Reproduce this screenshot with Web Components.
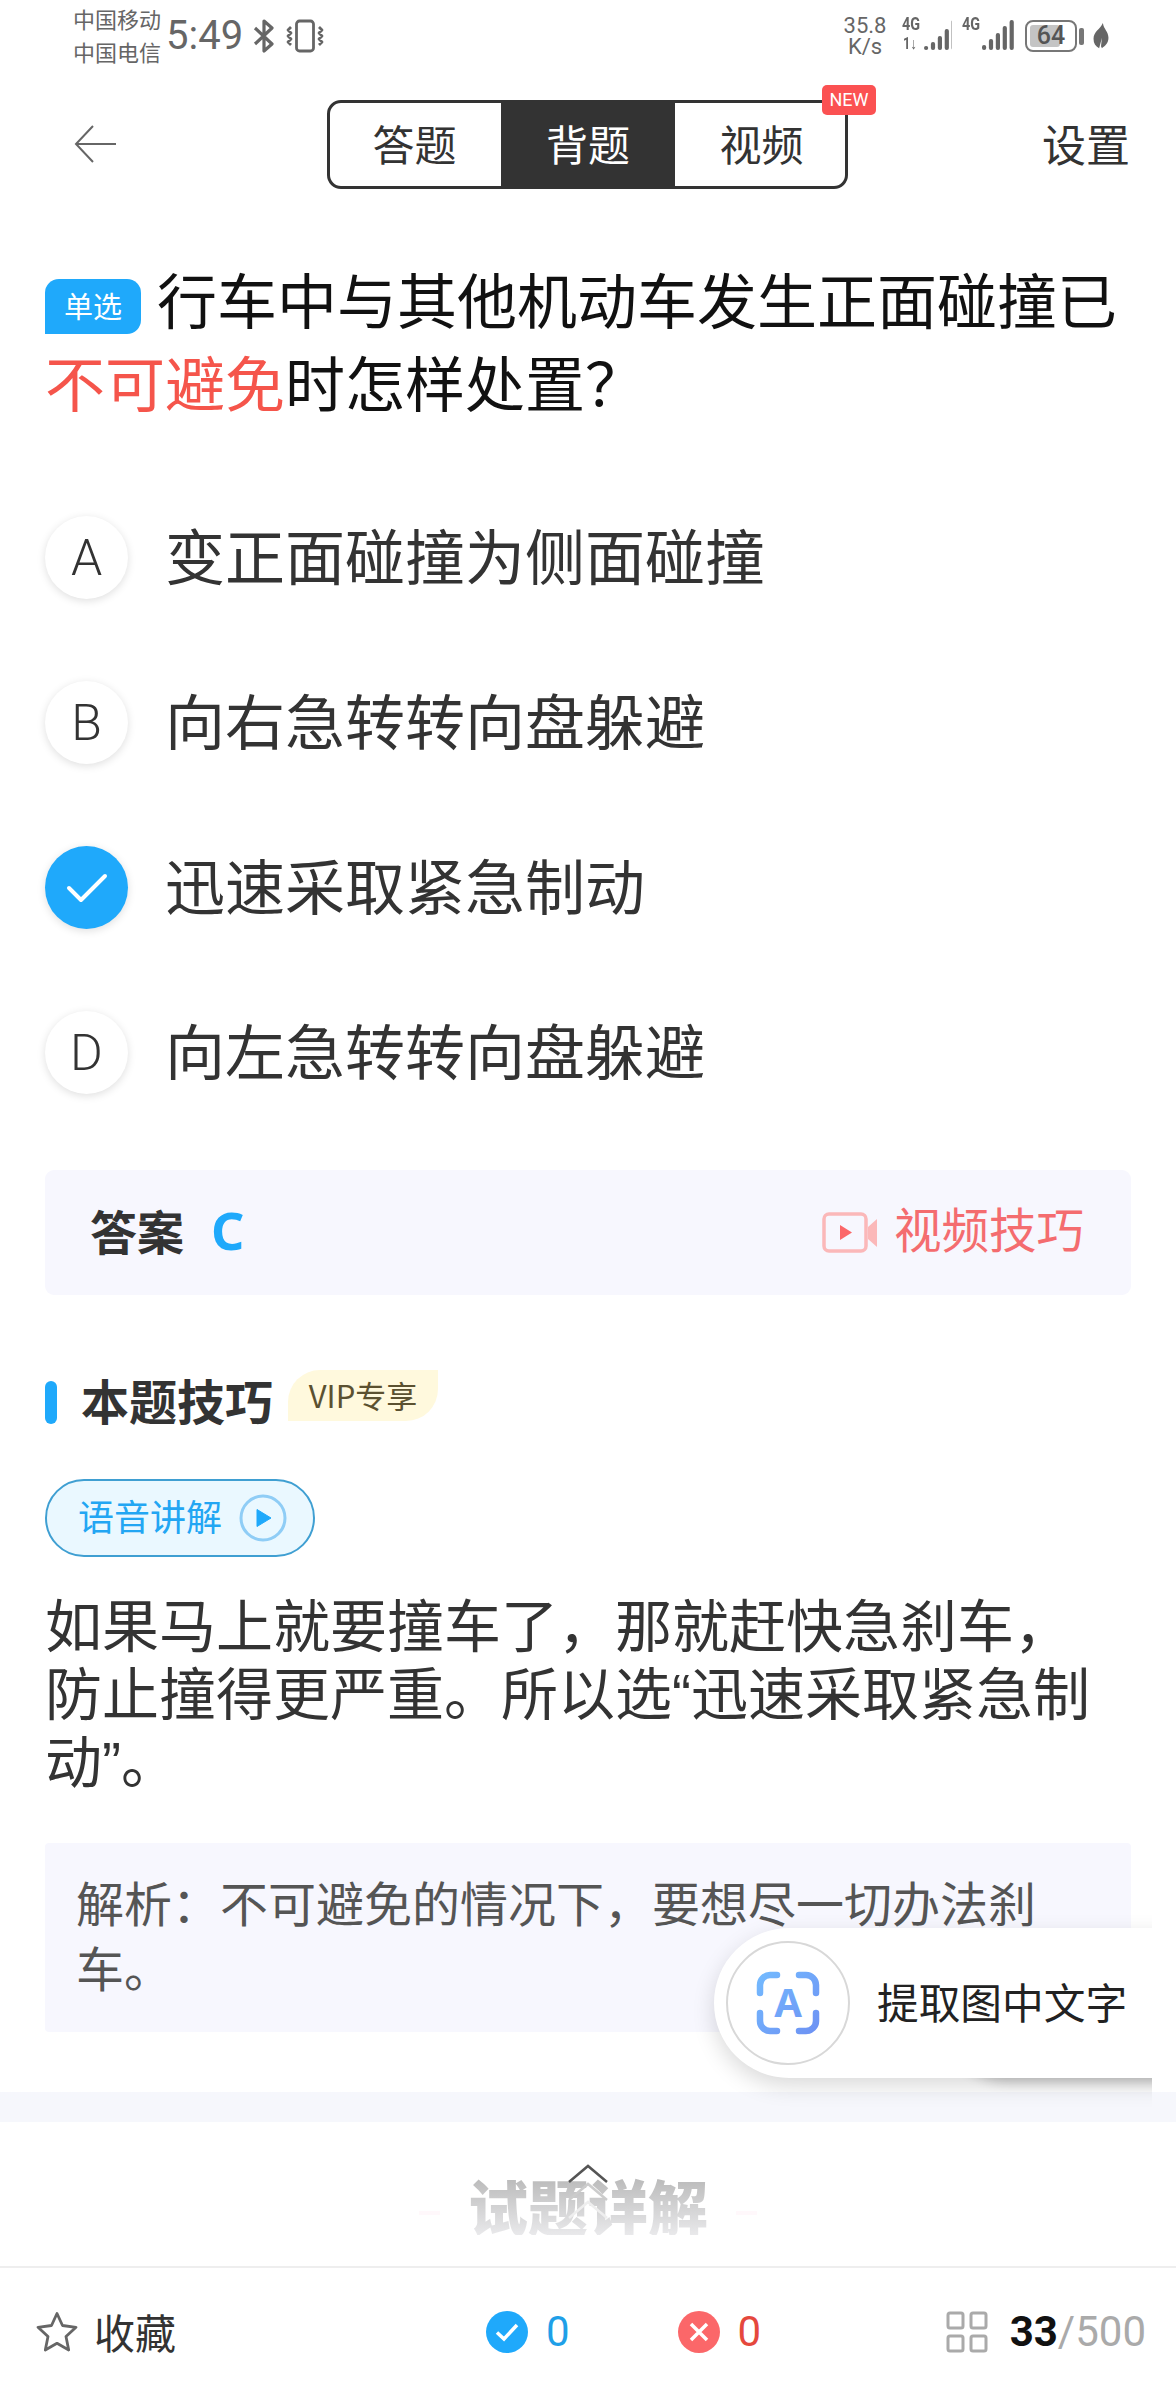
<!DOCTYPE html>
<html lang="zh-CN"><head><meta charset="utf-8"><title>背题</title>
<style>
html,body{margin:0;padding:0;background:#fff}
body{font-family:"Noto Sans CJK SC","Noto Sans",sans-serif;color:#333}
quiz-page{display:block;position:relative;width:1176px;height:2400px;overflow:hidden;background:#fff}
</style></head><body>
<quiz-page>
  <status-bar></status-bar>
  <top-nav></top-nav>
  <question-head>行车中与其他机动车发生正面碰撞已<span style="color:#f5554b">不可避免</span>时怎样处置？</question-head>
  <option-row letter="A">变正面碰撞为侧面碰撞</option-row>
  <option-row letter="B">向右急转转向盘躲避</option-row>
  <option-row checked>迅速采取紧急制动</option-row>
  <option-row letter="D">向左急转转向盘躲避</option-row>
  <answer-box></answer-box>
  <tip-section></tip-section>
  <detail-bar></detail-bar>
  <bottom-bar></bottom-bar>
  <ocr-popup></ocr-popup>
</quiz-page>
<script>
const CJK='"Noto Sans CJK SC","Noto Sans",sans-serif';
function def(name,html,setup){
  customElements.define(name,class extends HTMLElement{
    constructor(){super();const r=this.attachShadow({mode:'open'});r.innerHTML=typeof html==='function'?html(this):html;if(setup)setup(r,this);}
  });
}
const signal=(w,x0,bars)=>`<svg width="${w}" height="33" viewBox="0 0 ${w} 33">
${bars.map((h,i)=>`<rect x="${x0+i*6.9}" y="${33-h}" width="4.200" height="${h}" rx="2" fill="#666"/>`).join('')}</svg>`;
def('status-bar',`<style>
:host{display:flex;align-items:center;height:72px;padding-left:73px;box-sizing:border-box;color:#666;font-family:${CJK}}
.car{font-size:22px;line-height:33px;width:93px;color:#666;white-space:nowrap;margin-bottom:2px}
.time{font:400 40px/1 Roboto,sans-serif;width:87px}
.vib{margin-left:11px}
.r{margin-left:auto;display:flex;align-items:center;height:100%}
.sp{font:400 22px/21px Roboto,sans-serif;text-align:center;width:50px;margin-right:12px}
.s{position:relative;height:33px;display:block;top:-3px}
.s svg{position:absolute;right:0;top:0}
.s b{position:absolute;left:0;top:-2px;font:700 18px/18px Roboto,sans-serif;transform:scaleX(.8);transform-origin:0 0;white-space:nowrap}
.s i{position:absolute;left:1px;top:19px;font:700 16px/15px Roboto,sans-serif;font-style:normal;transform:scaleX(.8);transform-origin:0 0;white-space:nowrap}
.bat{position:relative;top:0;width:52px;height:32px;border:2.500px solid #777;border-radius:8px;box-sizing:border-box;font:500 25px/27px Roboto,sans-serif;text-align:center;color:#555;margin-right:2px;overflow:hidden}
.bat u{position:absolute;left:3px;top:3px;bottom:3px;width:62%;background:#c4c4c4;border-radius:3px}
.bat span{position:relative}
.nub{width:5px;height:17px;background:#777;border-radius:2px;margin-right:8px}
.leaf{margin-right:66px}
</style>
<div class="car">中国移动<br>中国电信</div><div class="time">5:49</div>
<svg class="bt" width="22" height="34" viewBox="0 0 22 34" fill="none" stroke="#666" stroke-width="3.200" stroke-linejoin="round"><path d="M2 9 19 25 11 32V2l8 7L2 25"/></svg>
<svg class="vib" width="38" height="34" viewBox="0 0 38 34" fill="none" stroke="#666" stroke-width="2.800" stroke-linejoin="round"><rect x="10.500" y="2" width="17" height="30" rx="3"/><path d="M5 8 2 11l3 3-3 3 3 3-3 3 3 3M33 8l3 3-3 3 3 3-3 3 3 3-3 3"/></svg>
<div class="r"><div class="sp">35.8<br>K/s</div>
<div class="s" style="width:50px;margin-right:10px"><b>4G</b><i>1↓</i>${signal(32,4,[4,8,14,21,30])}</div>
<div class="s" style="width:52px;margin-right:11px"><b>4G</b>${signal(34,2,[5,11,17,24,30])}</div>
<div class="bat"><u></u><span>64</span></div><div class="nub"></div>
<svg class="leaf" width="18" height="28" viewBox="0 0 18 30"><path d="M11 1C12 8 17 10 17 17c0 6-4 9-7 11l-1-2 1-9-3 11C3 26 1 23 1 18 1 10 8 8 11 1z" fill="#666"/></svg></div>`);
def('top-nav',`<style>
:host{display:flex;align-items:center;height:144px;position:relative;font-family:${CJK};color:#333}
.back{margin-left:74px;width:44px;display:block}
.tabs{display:flex;margin-left:209px;width:521px;height:89px;border:3px solid #333;border-radius:14px;box-sizing:border-box;position:relative}
.tabs div{display:flex;align-items:center;justify-content:center;font-size:42px;line-height:1;padding-bottom:3px;box-sizing:border-box}
.tabs .on{background:#333;color:#fff}
.new{position:absolute;right:-31px;top:-18px;width:54px;height:30px;background:#fb5152;color:#fff;font:400 18px/30px Roboto,sans-serif;text-align:center;border-radius:5px}
.set{margin-left:auto;margin-right:46px;font-size:44px;line-height:1;padding-bottom:3px}
</style>
<svg class="back" width="44" height="40" viewBox="0 0 44 40" fill="none" stroke="#666" stroke-width="2"><path d="M42 20H2M19 2 2 20l17 18"/></svg>
<div class="tabs"><div style="width:171px;padding-right:2px">答题</div><div class="on" style="width:174px">背题</div><div style="width:170px;padding-left:3px">视频</div><span class="new">NEW</span></div>
<div class="set">设置</div>`);
def('question-head',`<style>
:host{display:block;margin:40px 45px 53px;font-size:60px;line-height:83px;color:#111;font-family:${CJK}}
.tag{display:inline-block;width:96px;height:55px;margin-right:16px;vertical-align:6px;background:#1fa9fb;color:#fff;border-radius:14px 14px 14px 0;font-size:29px;line-height:53px;text-align:center}
</style><span class="tag">单选</span><slot></slot>`);
def('option-row',h=>`<style>
:host{display:flex;align-items:center;height:165px;margin:0 45px;font-size:60px;color:#333;font-family:${CJK}}
.c{width:83px;height:83px;border-radius:50%;background:#fff;box-shadow:0 2px 8px rgba(0,0,0,.13);display:flex;align-items:center;justify-content:center;font:300 50px/1 Roboto,sans-serif;color:#333;margin-right:37px;flex:none}
.c.on{background:#1fa9fb}
.x{margin-bottom:8px;line-height:80px}
</style><div class="c ${h.hasAttribute('checked')?'on':''}">${h.hasAttribute('checked')?'<svg width="42" height="30" viewBox="0 0 42 30" fill="none" stroke="#fff" stroke-width="4" stroke-linecap="round" stroke-linejoin="round"><path d="M3 15 15 27 39 3"/></svg>':h.getAttribute('letter')}</div><div class="x"><slot></slot></div>`);
def('answer-box',`<style>
:host{display:flex;align-items:center;height:125px;margin:35px 45px 0;background:#f7f7fe;border-radius:9px;padding:0 47px 0 45px;box-sizing:border-box;font-family:${CJK}}
.l{font-size:47px;font-weight:700;color:#333;line-height:60px;margin-bottom:5px}
.c{font:700 52px/1 "Noto Sans",sans-serif;color:#1fa9fb;margin-left:27px;margin-bottom:5px}
svg{margin-left:auto;margin-right:16px}
.v{font-size:47.500px;color:#f46c6f;line-height:1;margin-bottom:9px}
</style><span class="l">答案</span><span class="c">C</span>
<svg width="56" height="41" viewBox="0 0 56 41"><rect x="2" y="2" width="42" height="37" rx="5" fill="none" stroke="#fbb8b9" stroke-width="3.500"/><path d="M18 13l12 7.500-12 7.500z" fill="#fb6769"/><path d="M46 15l9-8v28l-9-8z" fill="#fbb8b9"/></svg>
<span class="v">视频技巧</span>`);
def('tip-section',`<style>
:host{display:block;font-family:${CJK};color:#333}
.h{display:flex;align-items:center;height:64px;margin:75px 45px 0}
.bar{width:12px;height:43px;border-radius:6px;background:#1fa9fb;margin-right:24px}
.t{font-size:48px;font-weight:700;line-height:1;margin-bottom:6px}
.vip{align-self:flex-start;margin-left:15px;width:150px;height:51px;background:#fff9dd;border-radius:32px 0 32px 0;color:#5b5130;font-size:31px;line-height:49px;text-align:center;box-sizing:border-box;white-space:nowrap}
.pill{display:flex;align-items:center;width:270px;height:78px;margin:45px 45px 0;box-sizing:border-box;border:2.500px solid #3f9fd2;border-radius:39px;background:#eaf8ff;color:#22a6f3;font-size:36px;padding-left:31px}
.pill span{margin-bottom:6px;line-height:50px}
.pill svg{margin-left:17px}
.e{margin:36px 45px 0;font-family:"Liberation Sans","Noto Sans CJK SC",sans-serif;font-size:57px;line-height:68px;color:#333;white-space:nowrap}
.a{margin:46px 45px 0;height:189px;box-sizing:border-box;padding:26px 31px 0;background:#f7f7fe;border-radius:4px;font-size:48px;line-height:65px;color:#555;white-space:nowrap}
.band{height:30px;margin-top:60px;background:#f6f7fc}
</style>
<div class="h"><span class="bar"></span><span class="t">本题技巧</span><span class="vip">VIP专享</span></div>
<div class="pill"><span>语音讲解</span><svg width="48" height="48" viewBox="0 0 48 48"><circle cx="24" cy="24" r="22" fill="none" stroke="#8fcdf6" stroke-width="3"/><path d="M18 15.500 32 24 18 32.500z" fill="#1fa9fb" stroke="#1fa9fb" stroke-width="1" stroke-linejoin="round"/></svg></div>
<div class="e">如果马上就要撞车了，那就赶快急刹车，<br>防止撞得更严重。所以选“迅速采取紧急制<br>动”。</div>
<div class="a">解析：不可避免的情况下，要想尽一切办法刹<br>车。</div>
<div class="band"></div>`);
def('detail-bar',`<style>
:host{display:flex;justify-content:center;position:relative;height:144px;font-family:${CJK}}
.t{margin-top:53px;font-size:60px;font-weight:900;line-height:60px;height:60px;color:transparent;background:linear-gradient(#b8b8b8,#e9e9eb);-webkit-background-clip:text;background-clip:text}
svg{position:absolute;left:568px;top:42px}
.d{position:absolute;top:89px;width:21px;height:4px;background:#fff8fb}
</style><span class="d" style="left:419px"></span><span class="t">试题详解</span><span class="d" style="left:736px"></span>
<svg width="40" height="62" viewBox="0 0 40 62" fill="none" stroke-width="2.500"><path d="M1 18 20 2l19 16" stroke="#555"/><path d="M1 36 20 20l19 16" stroke="#ccc"/><path d="M1 54 20 38l19 16" stroke="#eee"/></svg>`);
def('bottom-bar',`<style>
:host{display:flex;align-items:center;height:134px;border-top:2px solid #eee;box-sizing:border-box;padding-bottom:5px;padding-left:34px;font-family:${CJK};color:#333}
.fav{font-size:41px;margin-left:14px;line-height:1}
.ic{display:block}
.n{font:400 42px/1 Roboto,sans-serif;margin-left:18px}
.s1{margin-left:310px}.s2{margin-left:108px}.g{margin-left:auto}
.p{font:400 42px/1 Roboto,sans-serif;color:#aaa;margin:0 30px 0 22px;white-space:nowrap}
.p b{color:#111;font-weight:700}
</style>
<svg class="ic" width="46" height="44" viewBox="0 0 44 44" fill="none" stroke="#666" stroke-width="2.800" stroke-linejoin="round"><path d="M22 3.500 27.500 15.500 41 17.300 31 26.500 33.700 40 22 33.300 10.300 40 13 26.500 3 17.300 16.500 15.500z"/></svg>
<span class="fav">收藏</span>
<svg class="ic s1" width="42" height="42" viewBox="0 0 42 42"><circle cx="21" cy="21" r="21" fill="#1fa9fb"/><path d="M11 21.500 18 28 31 14" fill="none" stroke="#fff" stroke-width="3.500"/></svg>
<span class="n" style="color:#1fa0e8">0</span>
<svg class="ic s2" width="42" height="42" viewBox="0 0 42 42"><circle cx="21" cy="21" r="21" fill="#fb6769"/><path d="M13 13 29 29M29 13 13 29" fill="none" stroke="#fff" stroke-width="3.500"/></svg>
<span class="n" style="color:#e5483d">0</span>
<svg class="ic g" width="42" height="42" viewBox="0 0 42 42" fill="none" stroke="#aaa" stroke-width="3"><rect x="2" y="2" width="15" height="15" rx="2"/><rect x="25" y="2" width="15" height="15" rx="2"/><rect x="2" y="25" width="15" height="15" rx="2"/><rect x="25" y="25" width="15" height="15" rx="2"/></svg>
<span class="p"><b>33</b>/500</span>`);
def('ocr-popup',`<style>
:host{position:absolute;left:670px;top:1900px;width:482px;height:210px;overflow:hidden;display:block;font-family:${CJK}}
.b{position:absolute;left:44px;top:28px;width:500px;height:150px;border-radius:75px 0 0 75px;background:#fff;box-shadow:0 8px 22px rgba(0,0,0,.15),220px 9px 12px -5px rgba(0,0,0,.22);display:flex;align-items:center}
.c{width:124px;height:124px;border-radius:50%;box-sizing:border-box;border:2.500px solid #d8d8d8;margin-left:12px;display:flex;align-items:center;justify-content:center}
.t{margin-left:27px;font-size:41.700px;color:#222;line-height:1;padding-bottom:2px}
</style><div class="b"><div class="c"><svg width="64" height="64" viewBox="0 0 64 64"><defs><linearGradient id="g" gradientUnits="userSpaceOnUse" x1="0" y1="0" x2="64" y2="64"><stop offset="0" stop-color="#74bcff"/><stop offset="1" stop-color="#6d90f3"/></linearGradient></defs><path d="M4 22V14A10 10 0 0 1 14 4h7M43 4h7a10 10 0 0 1 10 10v8M4 42v8a10 10 0 0 0 10 10h7M43 60h7a10 10 0 0 0 10-10v-8" fill="none" stroke="url(#g)" stroke-width="6.500" stroke-linecap="round"/><text x="32" y="46" text-anchor="middle" font-family="Noto Sans,sans-serif" font-weight="700" font-size="40" fill="url(#g)">A</text></svg></div><div class="t">提取图中文字</div></div>`);
def('quiz-page','<slot></slot>');
</script>
</body></html>
